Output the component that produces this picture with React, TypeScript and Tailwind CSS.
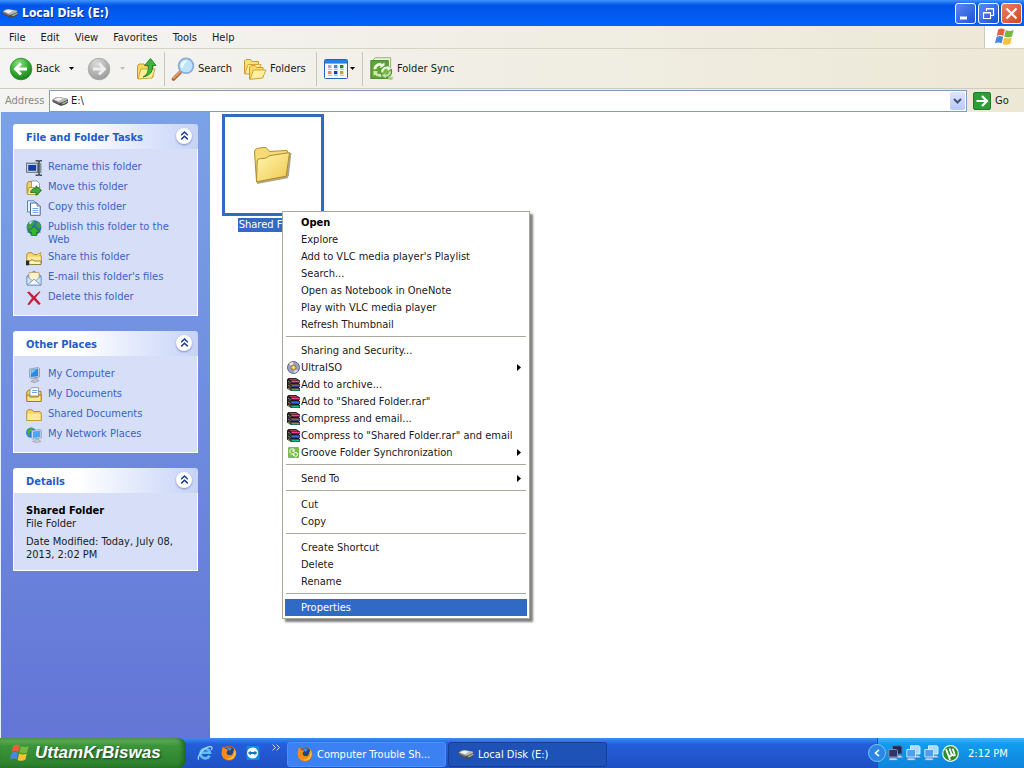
import React, { useId } from "react";

type IconProps = { className?: string };

const DriveIcon = ({ className = "h-4 w-4" }: IconProps) => (
  <svg className={className} viewBox="0 0 16 16" aria-hidden="true">
    <path d="M0.4 6.8 Q3 4.2 6 4 L14.6 5.4 Q16 6 16 7.2 V9.4 Q15.4 10.8 10.6 12.6 Q9 13 7.4 12.2 L0.6 9 Z" fill="#4a4a4c" />
    <path d="M0.6 6.6 Q3 4.2 6 4 L14.6 5.4 Q16 6.2 14.6 7.2 L9.6 9.6 Q8.4 10 7 9.4 Z" fill="#b9b9bb" />
    <path d="M2.4 6.4 Q4.4 4.9 6.6 4.8 L11 5.6 L6.8 8.2 Z" fill="#f2f2f2" />
    <path d="M9.8 10.2 L15.6 7.6 V9 L10 11.6 Z" fill="#a8a8aa" />
    <path d="M1 7.6 L7.6 10.6" stroke="#8b8b8d" strokeWidth="0.8" />
    <rect x="11.4" y="9.2" width="2" height="1.2" fill="#7bd65e" />
  </svg>
);

const WindowsFlag = ({ className }: IconProps) => (
  <svg className={className} viewBox="0 0 20 18" aria-hidden="true">
    <path d="M3.2 1.6 Q6.5 -0.4 9.8 1.6 L8.3 8.1 Q5 6.2 1.7 8 Z" fill="#e8603a" />
    <path d="M10.8 2.1 Q14.6 4 18.6 2 L17 8.5 Q13.2 10.3 9.3 8.5 Z" fill="#74b83e" />
    <path d="M1.5 9 Q4.8 7.2 8.1 9 L6.7 15.3 Q3.5 13.5 0 15.3 Z" fill="#4a86e0" />
    <path d="M9.1 9.5 Q12.9 11.3 16.8 9.4 L15.3 15.8 Q11.3 17.8 7.6 15.9 Z" fill="#f6c433" />
  </svg>
);

const RoundArrow = ({ disabled = false }: { disabled?: boolean }) => {
  const id = useId();
  return (
    <svg className="h-6 w-6 shrink-0" viewBox="0 0 24 24" aria-hidden="true">
      <defs>
        <radialGradient id={id} cx="0.4" cy="0.25" r="0.8">
          <stop offset="0" stopColor={disabled ? "#dcdcdc" : "#8fe07f"} />
          <stop offset="0.55" stopColor={disabled ? "#b4b4b4" : "#36ad33"} />
          <stop offset="1" stopColor={disabled ? "#989898" : "#1a7c1c"} />
        </radialGradient>
      </defs>
      <circle cx="12" cy="12" r="10.8" fill={`url(#${id})`} stroke={disabled ? "#a5a5a5" : "#2a8a2b"} strokeWidth="0.8" />
      <path
        d={disabled ? "M6 12 H17 M12 6.5 L17.5 12 L12 17.5" : "M18 12 H7 M12 6.5 L6.5 12 L12 17.5"}
        fill="none"
        stroke={disabled ? "#eeeeee" : "#ffffff"}
        strokeWidth="2.8"
      />
    </svg>
  );
};

const Caret = ({ className = "text-black" }: IconProps) => (
  <svg className={`h-[3px] w-[5px] shrink-0 ${className}`} viewBox="0 0 5 3" aria-hidden="true">
    <path d="M0 0 H5 L2.5 3 Z" fill="currentColor" />
  </svg>
);

const UpFolderIcon = () => (
  <svg className="h-6 w-6" viewBox="0 0 24 24" aria-hidden="true">
    <path d="M2.5 21.5 V8.5 L4 7 H9 L11 9 H18 V20 Z" fill="#f6d665" stroke="#c89a2a" />
    <path d="M3 22 L6 12 H20 L17 21 Z" fill="#ffef9c" stroke="#d0a63a" />
    <path d="M8 20 Q14 17.5 13.3 8.5 H9.6 L15.5 1.5 L21 8.5 H17.6 Q18.5 18 8 20 Z" fill="#3fb53a" stroke="#1f7d22" strokeWidth="0.9" />
  </svg>
);

const SearchIcon = () => (
  <svg className="h-6 w-6" viewBox="0 0 24 24" aria-hidden="true">
    <path d="M10 14.5 L2.5 22" stroke="#b3622d" strokeWidth="3.6" strokeLinecap="round" />
    <path d="M9.5 14.5 L2.6 21.2" stroke="#eaa77a" strokeWidth="1.6" strokeLinecap="round" />
    <circle cx="15" cy="8.8" r="7.4" fill="#bfe3fb" stroke="#8aaedb" strokeWidth="1.8" />
    <path d="M9.6 8.4 A5.5 5.5 0 0 1 17 4 Q12.5 5.5 11.8 11.5 Q9.8 10.5 9.6 8.4" fill="#f4fbff" />
  </svg>
);

const FoldersIcon = () => (
  <svg className="h-6 w-6" viewBox="0 0 24 24" aria-hidden="true">
    <path d="M1.5 16.5 V4 L3 2.5 H7.5 L9 4.5 H15.5 V15 Z" fill="#fbe07a" stroke="#cf9a2b" />
    <path d="M2 17 L5 7.5 H18 L14.5 16.5 Z" fill="#fff0a2" stroke="#d6a438" />
    <path d="M6.5 22 V10 L8 8.5 H12 L13.8 10.5 H20 V20.5 Z" fill="#fbd964" stroke="#cf9a2b" />
    <path d="M7 22.3 L10.5 13 H23 L19.5 21 Z" fill="#fff0a2" stroke="#d6a438" />
  </svg>
);

const dotColors = ["#b9a5c8", "#4d86c9", "#218a2c", "#e08a5b", "#1d3f9b", "#c2a62c"];
const ViewsIcon = () => (
  <svg className="h-5 w-6" viewBox="0 0 24 20" aria-hidden="true">
    <rect x="0.5" y="0.5" width="23" height="19" rx="1" fill="#f7faff" stroke="#2465b8" />
    <rect x="1" y="1" width="22" height="3.6" fill="#2a7fe2" />
    {dotColors.map((c, i) => (
      <rect key={c} x={4 + (i % 3) * 6} y={i < 3 ? 6 : 12} width="3.4" height="3.2" fill={c} />
    ))}
    <path d="M4 10.5 H8 M10 10.5 H14 M16 10.5 H20 M4 16.5 H8 M10 16.5 H14 M16 16.5 H20" stroke="#a8b7cf" strokeWidth="0.8" />
  </svg>
);

const SyncIcon = () => (
  <svg className="h-6 w-6" viewBox="0 0 24 24" aria-hidden="true">
    <path d="M2.5 3.6 L5.2 0.8 H20.6 V18 H18 V3.6 Z" fill="#eef6e2" stroke="#7fae5a" strokeWidth="0.9" />
    <rect x="0.8" y="3.6" width="17.4" height="18" fill="#5da336" stroke="#3f8422" strokeWidth="0.8" />
    <path d="M3.6 12.5 A6 6 0 0 1 12.6 7 L14.4 5.4 L14.8 11 L9.4 10.6 L11 8.9 A3.6 3.6 0 0 0 6.4 12 Z" fill="#eef8e0" />
    <path d="M3.4 13.8 L8.2 14.6 L6.8 15.9 Q8.4 17.6 11 16.6 L11.6 19.4 Q7.6 20.4 5 17.7 L3.6 18.8 Z" fill="#cfe8b2" />
    <circle cx="16.2" cy="14.6" r="5.4" fill="#79b650" stroke="#4b9129" strokeWidth="1.2" />
    <path d="M12.2 15.4 A4.2 4.2 0 0 1 18.4 11.2" fill="none" stroke="#e9f6da" strokeWidth="2" />
    <path d="M17.4 8.8 L21.8 11.6 L17.6 13.8 Z" fill="#e9f6da" />
    <path d="M20.2 14.6 A4.2 4.2 0 0 1 14.4 18.4" fill="none" stroke="#c3e2a2" strokeWidth="2" />
    <path d="M15.4 16.2 L11.6 18.6 L16 21.2 Z" fill="#c3e2a2" />
    <path d="M18.6 19.4 L23.4 19.8 L22 23.2 L18 22.6 Z" fill="#a9d183" />
  </svg>
);

const BigFolder = () => (
  <svg className="h-10 w-10" viewBox="0 0 40 40" aria-hidden="true">
    <defs>
      <linearGradient id="folderFront" x1="0" y1="0" x2="1" y2="1">
        <stop offset="0" stopColor="#fff6b4" />
        <stop offset="1" stopColor="#f0c84a" />
      </linearGradient>
    </defs>
    <path d="M4 38 L34 32.5 L37.5 8 L35 30.5 Z" fill="#7a7358" stroke="#8b8360" strokeWidth="1.8" opacity="0.7" />
    <path d="M3.5 36.5 L1.5 7 Q1.5 4 4.5 3.4 L11 2.4 Q13.5 2.2 14.5 4 L16.5 6.5 L34 5.4 L35 8 L33 31 Z" fill="#f5da76" stroke="#b28e2e" />
    <path d="M3.5 36.8 L4.2 16 Q4.3 14 6.3 13.8 L12.5 13.2 L16.8 10.6 L36.5 7.6 L33.2 31.2 Z" fill="url(#folderFront)" stroke="#ae8a2c" />
  </svg>
);

const SmallFolder = ({ className = "h-4 w-4", children }: IconProps & { children?: React.ReactNode }) => (
  <svg className={className} viewBox="0 0 16 16" aria-hidden="true">
    <path d="M0.8 13.5 V4.2 L2 2.8 H6 L7.4 4.6 H14 L15.2 6 V13.5 Z" fill="#f7d868" stroke="#b98a1e" />
    <path d="M1.5 6.8 H14.5 V13.2 H1.5 Z" fill="#ffec9b" />
    {children}
  </svg>
);

const RenameIcon = () => (
  <svg className="h-4 w-4" viewBox="0 0 16 16" aria-hidden="true">
    <rect x="0.7" y="3.2" width="11.6" height="9" fill="#f3f3f3" stroke="#4f5a6a" />
    <rect x="2.2" y="4.8" width="8" height="6" fill="#123c9e" />
    <path d="M9.6 0.8 H12 L13 1.6 L14 0.8 H16 M13 1.6 V14 M9.6 15.2 H12 L13 14.2 L14 15.2 H16" fill="none" stroke="#404a55" strokeWidth="1.5" />
    <path d="M11.4 3 V13 M14.8 3 V13" stroke="#708090" strokeWidth="1.2" />
  </svg>
);
const MoveIcon = () => (
  <svg className="h-4 w-4" viewBox="0 0 16 16" aria-hidden="true">
    <path d="M1 13.5 V4 L2.5 1.5 H6 V4 H9 V13.5 Z" fill="#f2d162" stroke="#a88a30" />
    <path d="M5.5 1 H11 L13.5 3.5 V11 H5.5 Z" fill="#fff" stroke="#7d8aa2" strokeWidth="0.8" />
    <path d="M1.5 14.5 L3 7.5 H14 L12.5 14.5 Z" fill="#ffeb90" stroke="#b3912c" strokeWidth="0.8" />
    <path d="M4.5 12.5 Q5 8.3 10 8.4 V5.8 L15.5 10.5 L10 15.4 V12.6 Z" fill="#3cae31" stroke="#1a6b1b" strokeWidth="0.8" />
  </svg>
);
const CopyIcon = () => (
  <svg className="h-4 w-4" viewBox="0 0 16 16" aria-hidden="true">
    <path d="M1.5 0.8 H8 L10 3 V12 H1.5 Z" fill="#e8f2ff" stroke="#5f83b5" />
    <path d="M4.5 3 H11 L14.2 6 V15.3 H4.5 Z" fill="#fff" stroke="#47648f" />
    <path d="M11 3 V6 H14.2" fill="#c2d8f4" stroke="#47648f" strokeWidth="0.8" />
    <path d="M6.4 8.5 H12.4 M6.4 10.5 H12.4 M6.4 12.5 H12.4" stroke="#7aa4dc" />
  </svg>
);
const PublishIcon = () => (
  <svg className="h-4 w-4" viewBox="0 0 16 16" aria-hidden="true">
    <circle cx="8" cy="7.6" r="7.4" fill="#2973c2" />
    <path d="M2 3.5 Q5 0.6 8 1 L9 4 L6 6 L6.5 8 L3 10 L1 8 Z M11 1 Q14.5 3 15.2 7 L13 9 L10 6 Z" fill="#3f9f3c" />
    <path d="M3 2.5 Q5 1 7 1.2 L4 4.5 Z" fill="#c2ebf7" />
    <path d="M8 6.5 L14.3 12 H10.8 V15.6 H5.2 V12 H1.7 Z" fill="#35b62e" stroke="#167018" strokeWidth="0.8" />
  </svg>
);
const ShareIcon = () => (
  <SmallFolder>
    <path d="M2 12 L6 9.6 L8.5 11 H15 V14.5 H5 L2 14.2 Z" fill="#fff3b6" stroke="#7b6420" strokeWidth="0.8" />
    <rect x="0" y="10.5" width="3.2" height="4.8" fill="#2a2a2a" />
    <path d="M10 5 L15 2.5 L13.5 6" fill="#ffe473" stroke="#b98a1e" strokeWidth="0.7" />
  </SmallFolder>
);
const MailIcon = () => (
  <svg className="h-4 w-4" viewBox="0 0 16 16" aria-hidden="true">
    <path d="M1 6 L8 1 L15 6 V15 H1 Z" fill="#9fc1e6" stroke="#5d7ba5" strokeWidth="0.8" />
    <path d="M3 2.5 H13 V9 L8 12 L3 9 Z" fill="#fff3cf" stroke="#b0884a" strokeWidth="0.6" />
    <path d="M1 15 L8 9.2 L15 15 Z" fill="#f2f8ff" stroke="#6f8fba" strokeWidth="0.8" />
    <path d="M1 6.4 L6.4 10.6 L1 15 Z M15 6.4 L9.6 10.6 L15 15 Z" fill="#cfe3f8" stroke="#6f8fba" strokeWidth="0.6" />
  </svg>
);
const DeleteIcon = () => (
  <svg className="h-4 w-4" viewBox="0 0 16 16" aria-hidden="true">
    <path d="M1 2.2 L3.2 1.5 L8 6.2 L13.5 1.2 L14.4 2 L9.6 7.8 L14.8 13.8 L12.8 15 L7.8 9.8 L3 15.2 L1.4 14.2 L6 8 Z" fill="#c81c3c" />
  </svg>
);
const ComputerIcon = () => (
  <svg className="h-4 w-4" viewBox="0 0 16 16" aria-hidden="true">
    <path d="M3.5 2 L12 0.5 L13.5 1.6 V10 L5 11.5 L3.5 10.2 Z" fill="#b9c9df" stroke="#7d93b5" strokeWidth="0.7" />
    <path d="M5 3 L12 1.8 V9 L5 10 Z" fill="#2e86e8" />
    <path d="M5.2 3.2 L11 2.2 L5.4 7 Z" fill="#7cc0fb" />
    <path d="M8 11 H11 V13 L13 13.6 L9 15.6 L4.8 14.4 L8 12.8 Z" fill="#c9c9d4" stroke="#85859a" strokeWidth="0.6" />
  </svg>
);
const DocumentsIcon = () => (
  <svg className="h-4 w-4" viewBox="0 0 16 16" aria-hidden="true">
    <path d="M0.8 14 V5 L2.5 3 H5 L15 4.5 V14 Z" fill="#f4cf58" stroke="#a87c1c" />
    <path d="M4 9 V2.6 L6 0.7 H12.4 V9 Z" fill="#fff" stroke="#6c8ab8" strokeWidth="0.8" />
    <path d="M6 3.5 H11 M6 5.5 H11" stroke="#79a3dd" />
    <path d="M0.8 14.5 V8 H3 L4 10 H12 L13 8 H15.2 V14.5 Z" fill="#ffe98f" stroke="#a87c1c" />
  </svg>
);
const NetworkIcon = () => (
  <svg className="h-4 w-4" viewBox="0 0 16 16" aria-hidden="true">
    <circle cx="5.2" cy="5.6" r="5.2" fill="#2b7fca" />
    <path d="M1 3.6 Q4 0 7 1 L6 4 L3.5 6 L4 8.5 L1.5 8 Z" fill="#43b13b" />
    <path d="M5.5 3.5 L14 2.5 L15.5 3.5 V11 L7 12.2 L5.5 11 Z" fill="#c7d5ea" stroke="#7d93b5" strokeWidth="0.6" />
    <path d="M7 4.6 L14.2 3.8 V10 L7 10.9 Z" fill="#4aa6f4" />
    <path d="M10 12 H12.5 V13.4 L15 14.4 L11 15.8 L6.5 14.4 L10 13.6 Z" fill="#cfcfd9" stroke="#85859a" strokeWidth="0.5" />
  </svg>
);

const DiscIcon = () => (
  <svg className="h-[13px] w-[13px]" viewBox="0 0 13 13" aria-hidden="true">
    <circle cx="6.5" cy="6.5" r="6" fill="#9fa3c4" stroke="#5b5e80" />
    <path d="M6.5 6.5 L2 3 A6 6 0 0 1 6 1 Z" fill="#f2ead0" />
    <path d="M6.5 6.5 L11 10 A6 6 0 0 1 7 12 Z" fill="#d7d2ee" />
    <circle cx="6.5" cy="6.5" r="2.6" fill="#d9b23e" stroke="#6d5a2a" strokeWidth="0.6" />
    <circle cx="6.5" cy="6.5" r="1" fill="#fff" />
  </svg>
);
const RarIcon = () => (
  <svg className="h-[13px] w-[13px]" viewBox="0 0 13 13" aria-hidden="true">
    <path d="M0 1.5 L1.5 0 H9 L13 2.4 V4.6 L12 5 L13 6.4 V8.8 L12 9.2 L13 10.4 V13 H4 L0 10.6 Z" fill="#1b1620" />
    <path d="M1.4 0.8 H8.6 L11.6 2.5 H4.4 Z" fill="#a8433a" />
    <path d="M4.4 3.6 H12.6" stroke="#ee3f94" strokeWidth="1.5" />
    <path d="M1 3 L3.6 4.6 M1 7 L3.6 8.6 M1 10.2 L3.6 12" stroke="#b9a98e" strokeWidth="0.8" />
    <path d="M1.2 5 L4.2 6.6 H11.8" fill="none" stroke="#7a5a2e" strokeWidth="0.8" />
    <path d="M4.4 7.8 H12.6" stroke="#3f6ff0" strokeWidth="1.5" />
    <path d="M1.2 9 L4.2 10.6 H11.8" fill="none" stroke="#6d6a30" strokeWidth="0.8" />
    <path d="M4.4 11.8 H12.6" stroke="#1fc98a" strokeWidth="1.5" />
  </svg>
);
const GrooveIcon = () => (
  <svg className="h-[11px] w-[11px]" viewBox="0 0 11 11" aria-hidden="true">
    <rect width="11" height="11" rx="1" fill="#7cbc4c" />
    <path d="M2 6 V3.5 Q2 2 3.5 2 H6 V4.8 M4 4 H6.2 M2.5 7 H5.5 V9" fill="none" stroke="#fff" />
    <circle cx="7.6" cy="7.4" r="1.9" fill="none" stroke="#fff" />
  </svg>
);

const FirefoxIcon = () => (
  <svg className="h-4 w-4 shrink-0" viewBox="0 0 16 16" aria-hidden="true">
    <circle cx="8" cy="8.2" r="7.4" fill="#e66a16" />
    <circle cx="8.4" cy="6.6" r="5" fill="#24457f" />
    <path d="M5 3 Q8 1 11 3 L9 6 Z" fill="#4f86c4" />
    <path d="M0.8 6 L1.8 1.6 L4 4 Q6.4 3.6 7 5.2 L5.6 7 Q5.5 10 9 10.3 Q12.6 9.8 12.2 5 Q15.8 9 12.8 13 Q9 16.6 4.2 14 Q0 11.4 0.8 6 Z" fill="#f58b1f" />
    <path d="M13 3 Q17 9 12 13.4 Q8 15.4 5 13.6 Q10.5 14 12.6 10.2 Q14 7 13 3 Z" fill="#ffcb3c" />
  </svg>
);
const IeIcon = () => (
  <svg className="h-4 w-4" viewBox="0 0 16 16" aria-hidden="true">
    <path d="M12.6 10.6 A4.8 4.8 0 1 1 13 7.8 H5" fill="none" stroke="#5fbdf5" strokeWidth="2.6" />
    <path d="M2 14.6 Q-0.4 12.8 4.5 6.8 Q10.6 0.6 14.4 1.8 Q15.8 2.6 14.2 5" fill="none" stroke="#a5e0ff" strokeWidth="1.2" />
  </svg>
);
const TeamViewerIcon = () => (
  <svg className="h-4 w-4" viewBox="0 0 16 16" aria-hidden="true">
    <rect x="1.5" y="1" width="13" height="14" rx="1" fill="#1587dc" />
    <circle cx="7.6" cy="8" r="5.6" fill="#f6fbff" />
    <path d="M2.8 8 L5.8 5.8 V7 H9.4 V5.8 L12.4 8 L9.4 10.2 V9 H5.8 V10.2 Z" fill="#1275c5" />
  </svg>
);
const NetTrayIcon = ({ off = false }: { off?: boolean }) => (
  <svg className="h-4 w-4" viewBox="0 0 16 16" aria-hidden="true">
    <path d="M4.5 0.8 H13 L14 1.8 V9 H4.5 Z" fill={off ? "#20294e" : "#a8dbfb"} stroke={off ? "#5f70a8" : "#e0f1ff"} strokeWidth="0.9" />
    <path d="M8 10.8 H13 L14.5 12.4 H9" fill="#d4e1f4" stroke="#8a9cc0" strokeWidth="0.5" />
    <path d="M0.8 4.5 H8.5 L9.5 5.5 V12 H0.8 Z" fill={off ? "#2b3768" : "#4f9fef"} stroke={off ? "#8795c4" : "#d9ebff"} strokeWidth="0.9" />
    <path d="M2 13.2 H8 L9.5 15 H1 Z" fill="#dfe8f6" stroke="#8a9cc0" strokeWidth="0.5" />
  </svg>
);
const TorrentIcon = () => (
  <svg className="h-[17px] w-[17px]" viewBox="0 0 17 17" aria-hidden="true">
    <circle cx="8.5" cy="8.5" r="7.8" fill="#2f8a2e" stroke="#e9f7e4" strokeWidth="1.2" />
    <path d="M4 4.2 L6.2 9.8 Q7.2 12 9 11 Q10 10.2 9.2 8.4 L7.4 3.4 M9.4 8.5 Q11.5 12 13.4 9.4 M10.6 3.6 L12.6 8.8 M6.4 10 L8 15" fill="none" stroke="#fff" strokeWidth="1.8" />
  </svg>
);

const menus = ["File", "Edit", "View", "Favorites", "Tools", "Help"];

const tasks = [
  { label: "Rename this folder", icon: <RenameIcon /> },
  { label: "Move this folder", icon: <MoveIcon /> },
  { label: "Copy this folder", icon: <CopyIcon /> },
  { label: "Publish this folder to the Web", icon: <PublishIcon /> },
  { label: "Share this folder", icon: <ShareIcon /> },
  { label: "E-mail this folder's files", icon: <MailIcon /> },
  { label: "Delete this folder", icon: <DeleteIcon /> },
];
const places = [
  { label: "My Computer", icon: <ComputerIcon /> },
  { label: "My Documents", icon: <DocumentsIcon /> },
  { label: "Shared Documents", icon: <SmallFolder /> },
  { label: "My Network Places", icon: <NetworkIcon /> },
];

type Entry = { label: string; icon?: React.ReactNode; sub?: boolean; bold?: boolean; active?: boolean };
const menuGroups: Entry[][] = [
  [
    { label: "Open", bold: true },
    { label: "Explore" },
    { label: "Add to VLC media player's Playlist" },
    { label: "Search..." },
    { label: "Open as Notebook in OneNote" },
    { label: "Play with VLC media player" },
    { label: "Refresh Thumbnail" },
  ],
  [
    { label: "Sharing and Security..." },
    { label: "UltraISO", icon: <DiscIcon />, sub: true },
    { label: "Add to archive...", icon: <RarIcon /> },
    { label: 'Add to "Shared Folder.rar"', icon: <RarIcon /> },
    { label: "Compress and email...", icon: <RarIcon /> },
    { label: 'Compress to "Shared Folder.rar" and email', icon: <RarIcon /> },
    { label: "Groove Folder Synchronization", icon: <GrooveIcon />, sub: true },
  ],
  [{ label: "Send To", sub: true }],
  [{ label: "Cut" }, { label: "Copy" }],
  [{ label: "Create Shortcut" }, { label: "Delete" }, { label: "Rename" }],
  [{ label: "Properties", active: true }],
];

const Panel = ({ title, children }: { title: string; children: React.ReactNode }) => (
  <section>
    <header className="flex h-[25px] items-center justify-between rounded-t-[3px] bg-linear-to-r from-white from-35% to-[#c6d3f7] pr-[6px] pl-[13px]">
      <h2 className="pt-[2px] text-[11px] font-bold text-[#215dc6]">{title}</h2>
      <button aria-label={`Collapse ${title}`} className="mb-[2px] flex h-4 w-4 items-center justify-center rounded-full bg-white shadow-[0_1px_2px_#7d8dc0]">
        <svg className="h-[9px] w-[9px]" viewBox="0 0 9 9" aria-hidden="true">
          <path d="M1.2 4.2 L4.5 1 L7.8 4.2 M1.2 8.4 L4.5 5.2 L7.8 8.4" fill="none" stroke="#1c3f8f" strokeWidth="1.5" />
        </svg>
      </button>
    </header>
    <div className="border border-t-0 border-white bg-[#d6dff7] px-3">{children}</div>
  </section>
);

const LinkList = ({ items }: { items: { label: string; icon: React.ReactNode }[] }) => (
  <ul className="flex flex-col gap-1 pt-[11px] pb-[9px]">
    {items.map((it) => (
      <li key={it.label}>
        <a href="#" className="flex gap-[6px] leading-[13px] text-[#3a62c8]">
          <span className="h-4 w-4 shrink-0">{it.icon}</span>
          <span>{it.label}</span>
        </a>
      </li>
    ))}
  </ul>
);

const Divider = () => <span className="h-[34px] w-px shrink-0 bg-[#c9c6b8]" />;

export default function App() {
  return (
    <div className="flex min-h-screen flex-col bg-white font-['DejaVu_Sans_Condensed','Noto_Sans',sans-serif] text-[11px] leading-[13px] text-[#1a1a1a]">
      <header className="flex h-[26px] items-center justify-between bg-linear-to-b from-[#3f94ff] via-[#0054e6] via-20% to-[#0062fb] pr-[2px] pl-[2px]">
        <div className="flex items-center gap-1">
          <DriveIcon />
          <h1 className="text-[12px] font-bold text-white [text-shadow:1px_1px_#0a2f8a]">Local Disk (E:)</h1>
        </div>
        <div className="flex gap-[2px]">
          <button aria-label="Minimize" className="flex h-[21px] w-[21px] rounded-[3px] border border-white bg-linear-to-br from-[#5c88f0] to-[#1c4fdc]">
            <svg viewBox="0 0 19 19" aria-hidden="true"><path d="M4 12.5 H11 V15.5 H4 Z" fill="#fff" /></svg>
          </button>
          <button aria-label="Restore" className="flex h-[21px] w-[21px] rounded-[3px] border border-white bg-linear-to-br from-[#5c88f0] to-[#1c4fdc]">
            <svg viewBox="0 0 19 19" aria-hidden="true">
              <path d="M7.5 7 V4.5 H14.5 V11.5 H12 M7 5 H15" fill="none" stroke="#fff" strokeWidth="1.2" />
              <path d="M4.5 8.5 H11.5 V14.5 H4.5 Z M4 9 H12" fill="none" stroke="#fff" strokeWidth="1.2" />
            </svg>
          </button>
          <button aria-label="Close" className="flex h-[21px] w-[21px] rounded-[3px] border border-white bg-linear-to-br from-[#ec7f62] to-[#d4421a]">
            <svg viewBox="0 0 19 19" aria-hidden="true"><path d="M4.5 4.5 L14.5 14.5 M14.5 4.5 L4.5 14.5" stroke="#fff" strokeWidth="2.2" /></svg>
          </button>
        </div>
      </header>

      <div className="bg-linear-to-r from-[#f4f4f3] to-[#ede8d6]">
        <nav className="flex h-[23px] items-center border-b border-[#d8d4c4]">
          <ul className="flex flex-1 gap-[15px] pl-[9px]">
            {menus.map((m) => (
              <li key={m}><button>{m}</button></li>
            ))}
          </ul>
          <div className="flex h-full w-10 items-center justify-center border-l border-[#cfcbbb] bg-white">
            <WindowsFlag className="h-[18px] w-5" />
          </div>
        </nav>

        <div className="flex h-10 items-center border-b border-[#d0ccbc]">
          <button className="flex w-[58px] items-center gap-[3px] pl-[9px]"><RoundArrow />Back</button>
          <button aria-label="Back history" className="w-7 pl-[11px]"><Caret /></button>
          <button aria-label="Forward" className="w-7 pl-px"><RoundArrow disabled /></button>
          <button aria-label="Forward history" className="w-[21px] pl-[6px]"><Caret className="text-[#c0bfb8]" /></button>
          <button aria-label="Up" className="w-[29px]"><UpFolderIcon /></button>
          <Divider />
          <button className="flex w-[78px] items-center gap-[3px] pl-[6px]"><SearchIcon />Search</button>
          <button className="flex w-[73px] items-center gap-[3px]"><FoldersIcon />Folders</button>
          <Divider />
          <button aria-label="Views" className="flex w-[45px] items-center gap-[2px] pl-[7px]"><ViewsIcon /><Caret /></button>
          <Divider />
          <button className="flex items-center gap-[3px] pl-[7px]"><SyncIcon />Folder Sync</button>
        </div>

        <div className="flex h-[23px] items-center">
          <label htmlFor="address" className="w-[49px] pl-[5px] text-[#8a897f]">Address</label>
          <div className="flex h-[22px] flex-1 items-center gap-[3px] border border-[#7f9db9] bg-white pr-px pl-[2px]">
            <DriveIcon />
            <input id="address" defaultValue="E:\" className="min-w-0 flex-1 outline-none" />
            <button aria-label="Show addresses" className="flex h-[18px] w-[15px] items-center justify-center rounded-[2px] bg-linear-to-b from-[#dce6fe] to-[#b7c9f7]">
              <svg className="h-[6px] w-[9px]" viewBox="0 0 9 6" aria-hidden="true"><path d="M1 1 L4.5 4.5 L8 1" fill="none" stroke="#42557e" strokeWidth="2" /></svg>
            </button>
          </div>
          <button className="flex w-[57px] items-center gap-1 pl-[6px]">
            <svg className="h-[18px] w-[18px]" viewBox="0 0 18 18" aria-hidden="true">
              <rect x="0.5" y="0.5" width="17" height="17" rx="1.5" fill="#2f9c38" stroke="#1f7a2a" />
              <path d="M3.5 9 H13.5 M9 4 L14 9 L9 14" fill="none" stroke="#fff" strokeWidth="2.2" />
            </svg>
            Go
          </button>
        </div>
      </div>

      <main className="relative flex flex-1 border-l border-[#e8effc]">
        <aside className="flex w-[209px] shrink-0 flex-col gap-[15px] bg-linear-to-b from-[#7ba2e7] to-[#6375d6] p-3">
          <Panel title="File and Folder Tasks"><LinkList items={tasks} /></Panel>
          <Panel title="Other Places"><LinkList items={places} /></Panel>
          <Panel title="Details">
            <div className="pt-[11px] pb-[9px]">
              <p className="font-bold text-black">Shared Folder</p>
              <p>File Folder</p>
              <p className="mt-[5px]">Date Modified: Today, July 08, 2013, 2:02 PM</p>
            </div>
          </Panel>
        </aside>
        <section aria-label="Files" className="flex-1 px-3 pt-[2px]">
          <figure className="flex w-[102px] flex-col items-center gap-[2px]">
            <div className="flex h-[102px] w-full items-center justify-center border-[3px] border-[#316ac5]"><BigFolder /></div>
            <figcaption className="bg-[#316ac5] px-px leading-[14px] whitespace-nowrap text-white">Shared Folder</figcaption>
          </figure>
        </section>

        <div role="menu" className="absolute top-[99px] left-[281px] w-[248px] border border-[#aca899] bg-white p-[2px] shadow-[3px_3px_2px_rgba(0,0,0,0.5)]">
          {menuGroups.map((group, i) => (
            <div key={i}>
              {i > 0 && <hr className="mx-px mt-[3px] mb-[5px] border-t border-[#aca899]" />}
              {group.map((e) => (
                <button
                  key={e.label}
                  role="menuitem"
                  className={`flex h-[17px] w-full items-center pr-[6px] text-left whitespace-nowrap ${e.active ? "bg-[#316ac5] text-white" : ""} ${e.bold ? "font-bold text-black" : ""}`}
                >
                  <span className="flex w-4 shrink-0 justify-center">{e.icon}</span>
                  <span className="flex-1">{e.label}</span>
                  {e.sub && <svg className="h-[7px] w-1" viewBox="0 0 4 7" aria-hidden="true"><path d="M0 0 L4 3.5 L0 7 Z" fill="#000" /></svg>}
                </button>
              ))}
            </div>
          ))}
        </div>
      </main>

      <footer className="flex h-[30px] items-stretch bg-linear-to-b from-[#3f8cf3] via-[#245edb] via-20% to-[#1f4fc4] text-white">
        <button className="flex w-[186px] items-center gap-[5px] rounded-r-lg bg-linear-to-b from-[#6cb56a] via-[#3b953a] via-25% to-[#2c7f2c] pl-[10px] font-['Liberation_Sans',sans-serif] text-[17px] leading-5 font-bold italic shadow-[inset_-3px_0_4px_#1f6420] [text-shadow:1px_1px_2px_#1b3f1b]">
          <WindowsFlag className="h-[18px] w-5" />
          UttamKrBiswas
        </button>
        <div className="flex w-[101px] items-center gap-2 pl-[11px]">
          <button aria-label="Internet Explorer"><IeIcon /></button>
          <button aria-label="Firefox"><FirefoxIcon /></button>
          <button aria-label="TeamViewer"><TeamViewerIcon /></button>
          <button aria-label="More" className="self-start pt-[6px] pl-[3px]">
            <svg className="h-[7px] w-2" viewBox="0 0 8 7" aria-hidden="true"><path d="M0.6 0.6 L3.4 3.5 L0.6 6.4 M4.6 0.6 L7.4 3.5 L4.6 6.4" fill="none" stroke="#d5e4ff" /></svg>
          </button>
        </div>
        <div className="flex flex-1 items-center gap-[2px] pt-[2px]">
          <button className="flex h-[25px] w-[159px] items-center gap-1 rounded-[3px] border border-[#4d90fa] bg-[#3c81f3] pl-[9px] whitespace-nowrap"><FirefoxIcon />Computer Trouble Sh...</button>
          <button className="flex h-[25px] w-[159px] items-center gap-1 rounded-[3px] border border-[#173f99] bg-[#1e52b7] pl-[9px] whitespace-nowrap"><DriveIcon />Local Disk (E:)</button>
        </div>
        <div className="flex w-[147px] items-center gap-[2px] border-l border-[#0f4fa8] bg-linear-to-b from-[#3fb5f7] via-[#129bed] via-20% to-[#0f84dc]">
          <button aria-label="Show hidden icons" className="-ml-[10px] flex h-[18px] w-[18px] shrink-0 items-center justify-center rounded-full border border-[#7cc4f8] bg-[#2b86e6]">
            <svg className="h-2 w-[6px]" viewBox="0 0 6 8" aria-hidden="true"><path d="M5 0.8 L1.5 4 L5 7.2" fill="none" stroke="#fff" strokeWidth="1.6" /></svg>
          </button>
          <NetTrayIcon off />
          <NetTrayIcon />
          <NetTrayIcon />
          <TorrentIcon />
          <time className="pl-[7px] whitespace-nowrap">2:12 PM</time>
        </div>
      </footer>
    </div>
  );
}
